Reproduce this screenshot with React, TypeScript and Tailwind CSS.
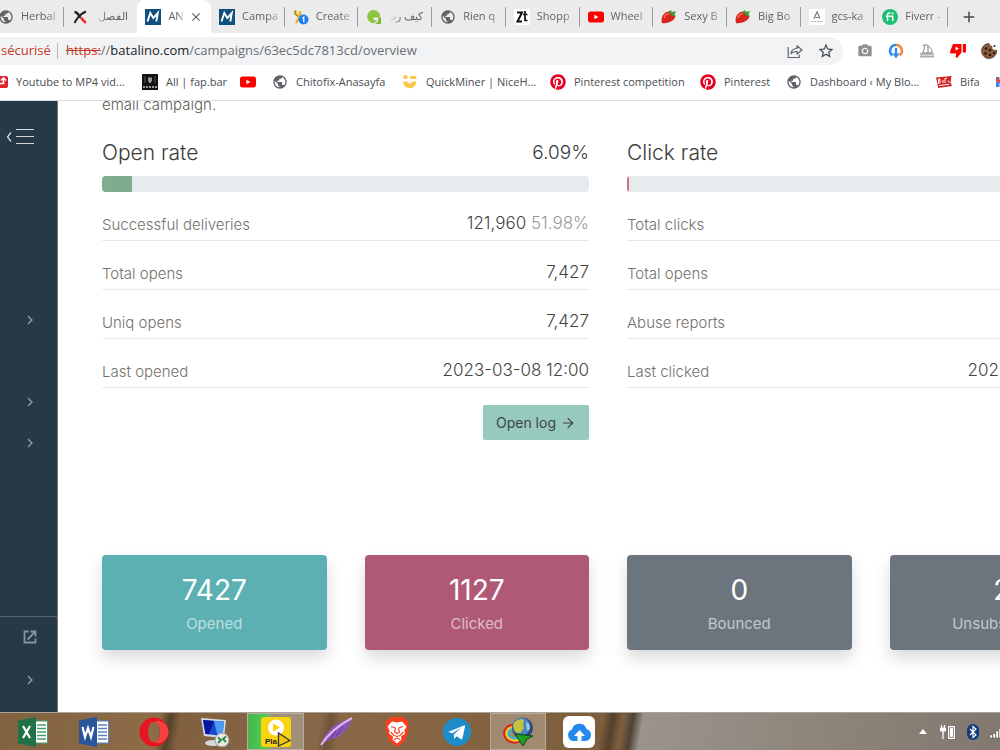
import React from 'react';
import { MdPublic, MdStarBorder, MdPhotoCamera, MdClose, MdAdd, MdChevronRight } from 'react-icons/md';
import { FaPinterest } from 'react-icons/fa';
import { ArrowRight } from 'lucide-react';

const GlobeIcon = () => <MdPublic className="h-4 w-4 text-[#5f6368]" />;

const YoutubeIcon = () => (
  <svg viewBox="0 0 16 16" className="h-4 w-4">
    <rect x="0" y="2.5" width="16" height="11" rx="2.5" fill="#f00" />
    <path d="M6.4 5.7v4.6L10.4 8z" fill="#fff" />
  </svg>
);

const XIcon = () => (
  <svg viewBox="0 0 16 16" className="h-4 w-4">
    <path d="M2.500 3c3 0 4 3 6 5.500" stroke="#222" strokeWidth="2.400" fill="none" />
    <path d="M14 2.500C10 4 5 9 2.500 14" stroke="#222" strokeWidth="2" fill="none" />
    <path d="M9 8.500c1.500 2 3 4.500 5 5" stroke="#e22" strokeWidth="2.400" fill="none" />
  </svg>
);

const MailerIcon = () => (
  <svg viewBox="0 0 16 16" className="h-4 w-4">
    <rect width="16" height="16" fill="#10507f" />
    <path d="M2.500 12.500 5.300 4l3 5 4.500-5-1.500 8.500" stroke="#fff" strokeWidth="1.900" fill="none" />
  </svg>
);

const CreateIcon = () => (
  <svg viewBox="0 0 16 16" className="h-4 w-4">
    <path d="M2.500 1v4l4 2.500M7 2v5L3 14" stroke="#e5b420" strokeWidth="2.400" fill="none" />
    <path d="M2 2v3l3 2.500" stroke="#8b7a3c" strokeWidth="1" fill="none" />
    <circle cx="10.500" cy="10.500" r="5" fill="#1a7ff0" />
    <path d="M9.300 9.200l1.500-1v5" stroke="#fff" strokeWidth="1.300" fill="none" />
  </svg>
);

const LeafIcon = () => (
  <svg viewBox="0 0 16 16" className="h-4 w-4">
    <path d="M7.500 1A6.600 6.600 0 1 0 8 14.200L11 11H7.500V8.500h6.600A6.700 6.700 0 0 0 7.500 1z" fill="#8cc63f" />
    <path d="M15 8.500V15H9l3-2.500.5-4z" fill="#7db83a" />
  </svg>
);

const ZtIcon = () => (
  <svg viewBox="0 0 16 16" className="h-4 w-4">
    <rect width="16" height="16" fill="#fff" />
    <path d="M3 3.500h5L3.500 12.500H8" stroke="#111" strokeWidth="2" fill="none" />
    <path d="M11 2v9.500h2.500M9 5.500h4.500" stroke="#111" strokeWidth="1.700" fill="none" />
  </svg>
);

const StrawberryIcon = () => (
  <svg viewBox="0 0 16 16" className="h-4 w-4">
    <path d="M1 14C-.5 9 2 3.500 7.500 2.500c4 0 7 3 6.500 6-1 3.500-8.500 6.500-13 5.500z" fill="#d8261c" />
    <path d="M3 9c1-3 3-4.500 5-4" stroke="#ff7a5c" strokeWidth="1.300" fill="none" />
    <path d="M7.500 3 10 1l1 2 4-1-1.500 3L15 8l-4-1.500z" fill="#3f9a35" />
  </svg>
);

const GcsIcon = () => (
  <svg viewBox="0 0 16 16" className="h-4 w-4">
    <rect width="16" height="16" fill="#fff" />
    <path d="M5 9.500 8 3l3 6.500M6.500 8.500h3" stroke="#777" strokeWidth="1.200" fill="none" />
    <path d="M2.500 12.500h11" stroke="#aaa" strokeDasharray="2 1" />
  </svg>
);

const FiverrIcon = () => (
  <svg viewBox="0 0 16 16" className="h-4 w-4">
    <circle cx="8" cy="8" r="8" fill="#1dbf73" />
    <path d="M5.500 12V6q0-2 2-2h1M4 7.200h6.700V12" stroke="#fff" strokeWidth="1.500" fill="none" />
    <circle cx="10.700" cy="4.500" r="1" fill="#fff" />
  </svg>
);

type Tab = { title: string; icon: React.ReactNode; active?: boolean; rtl?: boolean; bare?: boolean };

const tabs: Tab[] = [
  { title: 'Herbal', icon: <GlobeIcon /> },
  { title: 'الفصل', icon: <XIcon />, rtl: true, bare: true },
  { title: 'AN', icon: <MailerIcon />, active: true },
  { title: 'Campa', icon: <MailerIcon /> },
  { title: 'Create', icon: <CreateIcon /> },
  { title: 'كيف رب', icon: <LeafIcon />, rtl: true },
  { title: 'Rien q', icon: <GlobeIcon /> },
  { title: 'Shopp', icon: <ZtIcon /> },
  { title: 'Wheel', icon: <YoutubeIcon /> },
  { title: 'Sexy B', icon: <StrawberryIcon /> },
  { title: 'Big Bo', icon: <StrawberryIcon /> },
  { title: 'gcs-ka', icon: <GcsIcon /> },
  { title: 'Fiverr -', icon: <FiverrIcon /> },
];

function TabStrip() {
  return (
    <div className="flex h-[33px] bg-[#ebebeb] text-[11px] text-[#5f6368]">
      <div className="-ml-2.5 flex min-w-0 flex-1">
        {tabs.map((tab, i) => (
          <div
            key={i}
            className={
              tab.active
                ? 'flex min-w-0 flex-1 items-center rounded-t-lg bg-white pl-2'
                : 'flex min-w-0 flex-1 items-center pl-2'
            }
          >
            <span className="mr-[7px] shrink-0">{tab.icon}</span>
            <span
              dir={tab.rtl ? 'rtl' : 'ltr'}
              className={
                tab.rtl
                  ? 'mr-2 min-w-0 flex-1 overflow-hidden whitespace-nowrap [mask-image:linear-gradient(to_left,black_60%,transparent)]'
                  : 'min-w-0 flex-1 overflow-hidden whitespace-nowrap [mask-image:linear-gradient(to_right,black_60%,transparent)]'
              }
            >
              {tab.title}
            </span>
            {tab.active ? (
              <button type="button" aria-label="Close tab" className="mr-2 ml-1 shrink-0">
                <MdClose className="h-3.5 w-3.5" />
              </button>
            ) : (
              <span className={tab.bare ? 'h-5 w-px shrink-0' : 'h-5 w-px shrink-0 bg-[#9a9da1]'} />
            )}
          </div>
        ))}
      </div>
      <button type="button" aria-label="New tab" className="flex w-[52px] items-center pl-3 text-[#45484c]">
        <MdAdd className="h-[18px] w-[18px]" />
      </button>
    </div>
  );
}

const ShareIcon = () => (
  <svg viewBox="0 0 16 16" className="h-4 w-4" fill="none" stroke="#5f6368" strokeWidth="1.200">
    <path d="M1.200 4v10.500h11V11.500" />
    <path d="M4 10.500c.5-3.500 2.500-5 6-5V2.800L15 7l-5 4V8.500c-3 0-4.500.3-6 2z" strokeLinejoin="round" />
  </svg>
);

const DownloaderIcon = () => (
  <svg viewBox="0 0 16 16" className="h-4 w-4" fill="none">
    <path d="M4.500 12.500A5.800 5.800 0 0 1 8 2" stroke="#2f8fe8" strokeWidth="2.600" />
    <path d="M8 2a5.800 5.800 0 0 1 3.500 10.500" stroke="#f08a3c" strokeWidth="2.600" />
    <path d="M8 5v6" stroke="#2f8fe8" strokeWidth="2.400" />
    <path d="M4.500 10.500h7L8 15.500z" fill="#2f8fe8" />
  </svg>
);

const ShipIcon = () => (
  <svg viewBox="0 0 16 16" className="h-4 w-4" fill="none" stroke="#7d8286">
    <path d="M4 2h4c4 2 5 5 5 8H3c2-2 3-5 2-8M9 3v7M1 11h14" />
    <path d="M1 13.500h14" stroke="#9db69b" strokeWidth="2" />
  </svg>
);

const DislikeIcon = () => (
  <svg viewBox="0 0 16 16" className="h-4 w-4">
    <path d="M3 1h8.500v8.500L7 15l-1.500-1 .8-3.500H1c-1-.5-1-1.500-.8-2.500z" fill="#f00" />
    <path d="M12.800 1H16v8.500h-3.200z" fill="#f00" />
    <path d="M5.500 3.500v4l3.500-2z" fill="#fff" />
  </svg>
);

const CookieIcon = () => (
  <svg viewBox="0 0 16 16" className="h-4 w-4">
    <path d="M8 .5a3 3 0 0 0 3 3 3 3 0 0 0 4.500 3.500A7.500 7.500 0 1 1 8 .5z" fill="#8a5a3c" stroke="#4b2e1e" strokeWidth=".8" />
    <g fill="#2c1a12">
      <circle cx="5" cy="5.500" r="1.300" />
      <circle cx="9" cy="7" r="1.300" />
      <circle cx="4.500" cy="10.500" r="1.300" />
      <circle cx="9" cy="12" r="1.300" />
      <circle cx="13" cy="10" r="1.200" />
      <circle cx="13.500" cy="3" r="1" />
    </g>
  </svg>
);

function AddressBar() {
  return (
    <div className="flex h-[35px] items-center bg-white pt-px">
      <div className="flex h-7 flex-1 items-center rounded-r-full bg-[#f1f3f4] pr-2 pl-px text-[13px] text-[#6b6f73]">
        <span className="w-14 text-[#c5392b]">sécurisé</span>
        <span className="mr-2 h-4 w-px bg-[#b6b9bc]" />
        <span className="flex-1 whitespace-nowrap">
          <span className="text-[#c5392b] line-through">https:</span>//
          <span className="text-[#202124]">batalino.com</span>/campaigns/63ec5dc7813cd/overview
        </span>
        <button type="button" aria-label="Share" className="mr-3.5">
          <ShareIcon />
        </button>
        <button type="button" aria-label="Bookmark this page">
          <MdStarBorder className="h-[18px] w-[18px] text-[#44474a]" />
        </button>
      </div>
      <div className="flex w-[157px] shrink-0 items-center gap-[15px] overflow-hidden pl-3.5">
        <MdPhotoCamera className="h-4 w-4 shrink-0 text-[#909090]" />
        <span className="shrink-0"><DownloaderIcon /></span>
        <span className="shrink-0"><ShipIcon /></span>
        <span className="shrink-0"><DislikeIcon /></span>
        <span className="shrink-0"><CookieIcon /></span>
      </div>
    </div>
  );
}

const Mp4Icon = () => (
  <svg viewBox="0 0 16 16" className="h-4 w-4">
    <rect y="2" width="16" height="12" rx="2" fill="#e5202b" />
    <path d="M8 9.500h3.500V5M9 6.500 11.500 4 14 6.500" stroke="#fff" strokeWidth="1.600" fill="none" />
  </svg>
);

const BarIcon = () => (
  <svg viewBox="0 0 16 16" className="h-4 w-4">
    <rect width="16" height="16" fill="#111" />
    <path d="M3 2v7M13 2v7" stroke="#555" />
    <path d="M6 3.500h4v3L8.800 9H7.200L6 6.500z" fill="#999" />
    <path d="M1 13h14" stroke="#ccc" strokeWidth="1.500" strokeDasharray="2 1" />
  </svg>
);

const MinerIcon = () => (
  <svg viewBox="0 0 16 16" className="h-4 w-4" fill="#fbc94a">
    <rect x="1.500" y="1" width="4" height="4" rx="1" />
    <rect x="8" y="2" width="6.500" height="3" rx="1" />
    <path d="M1 7.500h13.500a6.700 6.700 0 0 1-13.500 0z" />
    <path d="M5.500 7.500h4.600a2.300 2 0 0 1-4.600 0z" fill="#fff" />
  </svg>
);

const PinIcon = () => <FaPinterest className="h-4 w-4 text-[#e60023]" />;

const BifaIcon = () => (
  <svg viewBox="0 0 16 16" className="h-4 w-4">
    <path d="M0 3.500 15.500 2l-1 6.500L16 12 2 14l-.5-4z" fill="#d22222" />
    <path d="M2.500 5v4.500M2.500 5q3 0 1 2 3 .5-1 2.500M7 6v3M9 9V4.500l2-.5M12 6.500l1.500 2.500M3 11.500l10-1.200" stroke="#fff" fill="none" />
  </svg>
);

const GmailIcon = () => (
  <svg viewBox="0 0 16 16" className="h-4 w-4">
    <path d="M0 3h3.500v10H0z" fill="#4285f4" />
    <path d="M12.500 3H16v10h-3.500z" fill="#34a853" />
    <path d="M0 3l8 6 8-6v3.500l-8 6-8-6z" fill="#ea4335" />
  </svg>
);

const bookmarks = [
  { label: 'Youtube to MP4 vid...', icon: <Mp4Icon />, width: 'w-[150px]' },
  { label: 'All | fap.bar', icon: <BarIcon />, width: 'w-[98px]' },
  { label: '', icon: <YoutubeIcon />, width: 'w-8' },
  { label: 'Chitofix-Anasayfa', icon: <GlobeIcon />, width: 'w-[130px]' },
  { label: 'QuickMiner | NiceH...', icon: <MinerIcon />, width: 'w-[148px]' },
  { label: 'Pinterest competition', icon: <PinIcon />, width: 'w-[150px]' },
  { label: 'Pinterest', icon: <PinIcon />, width: 'w-[86px]' },
  { label: 'Dashboard ‹ My Blo...', icon: <GlobeIcon />, width: 'w-[150px]' },
  { label: 'Bifa', icon: <BifaIcon />, width: 'w-[60px]' },
  { label: '', icon: <GmailIcon />, width: 'w-8' },
];

function BookmarksBar() {
  return (
    <nav className="flex h-[33px] items-center overflow-hidden border-b border-[#dadce0] bg-white pb-1 text-[11px] text-[#4a4d51]">
      <div className="-ml-2 flex">
        {bookmarks.map((b, i) => (
          <a key={i} href="#" className={`flex shrink-0 items-center gap-2 whitespace-nowrap ${b.width}`}>
            <span className="shrink-0">{b.icon}</span>
            {b.label}
          </a>
        ))}
      </div>
    </nav>
  );
}

const Arrow = () => <MdChevronRight className="h-[18px] w-[18px] stroke-current" />;

const ExternalIcon = () => (
  <svg viewBox="0 0 14 14" className="ml-0.5 h-3.5 w-3.5" fill="none" stroke="currentColor" strokeWidth="1.800">
    <path d="M5.500 1.500h-4v11h11v-4" />
    <path d="M7.500 1.500h5v5M12 2 4.500 9.500" />
  </svg>
);

// collapsed menu: only entries with a sub menu show an arrow
const menu = [true, false, true, true];

function Sidebar() {
  return (
    <aside className="flex w-[58px] shrink-0 flex-col border-r border-[#6f7f86] bg-[#273946] text-[#87949a]">
      <button type="button" aria-label="Collapse menu" className="mt-6 ml-1.5 h-6 w-7">
        <svg viewBox="0 0 28 24" className="h-6 w-7" fill="none" stroke="#d3d8da">
          <path d="M5 7.500 1.500 12 5 16.500" strokeWidth="1.300" />
          <path d="M10 4.500h18M10 11.500h18M10 18.500h18" strokeWidth="1.200" />
        </svg>
      </button>
      <nav className="mt-[150px]">
        {menu.map((hasArrow, i) => (
          <a key={i} href="#" className="flex h-[41px] items-center pl-[21px]">
            {hasArrow && <Arrow />}
          </a>
        ))}
      </nav>
      <nav className="mt-auto border-t border-[#55656f] pb-2.5">
        <a href="#" aria-label="Open site" className="flex h-10 items-center pl-[21px]">
          <ExternalIcon />
        </a>
        <a href="#" aria-label="More" className="flex h-[45px] items-center pl-[21px]">
          <Arrow />
        </a>
      </nav>
    </aside>
  );
}

type RatePanelProps = {
  title: string;
  rate?: string;
  percent: number;
  barClass: string;
  rows: { label: string; value?: string; note?: string }[];
};

function RatePanel({ title, rate, percent, barClass, rows }: RatePanelProps) {
  return (
    <section className="min-w-0">
      <div className="flex h-12 items-center justify-between pt-0.5 text-[#3d3b38]">
        <h2 className="text-[21px]">{title}</h2>
        <span className="text-[19px]">{rate}</span>
      </div>
      <div className="h-4 overflow-hidden rounded bg-[#e8ebee]">
        <div className={`h-full ${barClass}`} style={{ width: `${percent}%` }} />
      </div>
      <dl>
        {rows.map((row) => (
          <div
            key={row.label}
            className="flex h-[49px] items-end justify-between border-b border-dotted border-[#d4d4d4] pb-[5px]"
          >
            <dt className="text-[15px] leading-5 text-[#74716d]">{row.label}</dt>
            <dd className="text-[17px] leading-6 text-[#45423f]">
              {row.value} {row.note && <span className="text-[#9a9896]">{row.note}</span>}
            </dd>
          </div>
        ))}
      </dl>
    </section>
  );
}

const openRows = [
  { label: 'Successful deliveries', value: '121,960', note: '51.98%' },
  { label: 'Total opens', value: '7,427' },
  { label: 'Uniq opens', value: '7,427' },
  { label: 'Last opened', value: '2023-03-08 12:00' },
];

const clickRows = [
  { label: 'Total clicks' },
  { label: 'Total opens' },
  { label: 'Abuse reports' },
  { label: 'Last clicked', value: '2023-03-08 12:00' },
];

const stats = [
  { value: '7427', label: 'Opened', color: 'bg-[#5cb0b2]' },
  { value: '1127', label: 'Clicked', color: 'bg-[#b05977]' },
  { value: '0', label: 'Bounced', color: 'bg-[#6c757d]' },
  { value: '2', label: 'Unsubscribed', color: 'bg-[#6c757d]' },
];

function Overview() {
  return (
    <main className="min-w-0 flex-1 overflow-hidden bg-white pl-11 font-['Inter','Liberation_Sans',sans-serif] font-light">
      <div className="-mr-[114px] pb-[61px]">
        <p className="-mt-2 text-[15px] leading-6 text-[#5f5c58]">email campaign.</p>
        <div className="mt-[11px] grid grid-cols-2 gap-[38px]">
          <div>
            <RatePanel title="Open rate" rate="6.09%" percent={6.09} barClass="bg-[#80ab8e]" rows={openRows} />
            <div className="mt-[17px] flex justify-end">
              <button
                type="button"
                className="flex h-[35px] items-center gap-1 rounded-xs bg-[#98c9bd] px-[13px] text-sm font-normal text-[#3a4549]"
              >
                Open log <ArrowRight className="h-4 w-4" strokeWidth={1.8} />
              </button>
            </div>
          </div>
          <RatePanel title="Click rate" percent={0.4} barClass="bg-[#d0708c]" rows={clickRows} />
        </div>
        <div className="mt-[115px] grid grid-cols-4 gap-[38px]">
          {stats.map((s) => (
            <div
              key={s.label}
              className={`flex h-[95px] flex-col items-center justify-center rounded pt-0.5 shadow-[0_8px_16px_rgba(0,0,0,0.15)] ${s.color}`}
            >
              <div className="text-[28px] leading-9 font-normal text-white">{s.value}</div>
              <div className="mt-1 text-[15px] leading-6 font-normal text-white/60">{s.label}</div>
            </div>
          ))}
        </div>
      </div>
    </main>
  );
}

const OfficeIcon = ({ dark, light, glyph }: { dark: string; light: string; glyph: string }) => (
  <svg viewBox="0 0 30 30" className="h-[30px] w-[30px]">
    <rect x="15" y="4" width="14.500" height="22" fill="#fff" stroke={light} />
    <path d="M19 8h9M19 11.500h9M19 15h9M19 18.500h9M19 22h9" stroke={light} strokeWidth="1.500" />
    <path d="M0 3.500 18 0v30L0 26.500z" fill={dark} />
    <path d={glyph} stroke="#fff" strokeWidth="2.200" fill="none" />
  </svg>
);

const OperaIcon = () => (
  <svg viewBox="0 0 30 30" className="h-[30px] w-[30px]">
    <path fillRule="evenodd" d="M15 .5a14.500 14.500 0 1 0 0 29 14.500 14.500 0 1 0 0-29zm0 4.500c4 0 6 4.500 6 10s-2 10-6 10-6-4.500-6-10 2-10 6-10z" fill="#ea1420" />
    <path d="M15 5c6-4 14.500 2 14.500 10S21 29 15 25c4 0 6-4.500 6-10s-2-10-6-10z" fill="#f8403f" />
  </svg>
);

const RemoteIcon = () => (
  <svg viewBox="0 0 30 30" className="h-[30px] w-[30px]">
    <ellipse cx="13" cy="26" rx="8" ry="3" fill="#d5d8dc" />
    <path d="M1 1l25 2-2 18-20-2z" fill="#d3dbe6" />
    <path d="M3 3l21 1.500-1.500 14.500L5.500 17z" fill="#1a49cf" />
    <path d="M14 4l10 .5-1.500 14.500-5-.5z" fill="#4f9af0" />
    <path d="M3 3l11 1-5 13.300L5.500 17z" fill="#0715a0" />
    <circle cx="22" cy="23" r="7" fill="#e8e9e8" stroke="#999" />
    <path d="M18 20.500l3 2.500-3 3M26 19.500 23 22l3 3" stroke="#258a35" strokeWidth="1.800" fill="none" />
  </svg>
);

const PlayIcon = () => (
  <svg viewBox="0 0 30 30" className="h-[30px] w-[30px]">
    <rect width="30" height="30" rx="3" fill="#fad40f" />
    <circle cx="15" cy="10.500" r="8" fill="#fff" />
    <path d="M12 6.500v8l7-4z" fill="#fad40f" />
    <text x="4" y="27" fontSize="8" fontWeight="700" fontFamily="Liberation Sans" fill="#222">Pla</text>
    <path d="M17.500 16v13L29 23.500z" fill="#f2c60d" stroke="#333" strokeWidth="1.300" />
  </svg>
);

const FeatherIcon = () => (
  <svg viewBox="0 0 34 30" className="h-[30px] w-[34px]">
    <path d="M2 28C5 16 14 6 33 1c-2 12-12 20-24 22z" fill="#8a55b5" />
    <path d="M2 28C9 17 18 9 33 1" stroke="#dcb6ef" strokeWidth="2" fill="none" />
    <path d="M11 22l6-8M17 19l7-9" stroke="#5e3784" />
  </svg>
);

const BraveIcon = () => (
  <svg viewBox="0 0 26 30" className="h-[30px] w-[26px]">
    <path d="M7 0h12l3 3 3 1-1 4 1 3-4 13-8 6-8-6L1 11l1-3-1-4 3-1z" fill="#f8401c" />
    <path d="M8 4.500l5 1 5-1 4.500 5-2 4 .5 3-4 3 .5 3-4.500 4-4.500-4 .5-3-4-3 .5-3-2-4z" fill="#fff" />
    <path d="M7 9.500l4.500 1.500M19 9.500l-4.500 1.500M11.500 11l-1 4 2.500 1.500 2.500-1.500-1-4M6.500 15l3.500 3.500 3 1 3-1 3.500-3.500M10 22.500l3-1.500 3 1.500" stroke="#f8401c" strokeWidth="1.100" fill="none" />
  </svg>
);

const TelegramIcon = () => (
  <svg viewBox="0 0 28 28" className="h-7 w-7">
    <circle cx="14" cy="14" r="14" fill="#1e8cc8" />
    <path d="M5.500 13.800 21 7.600c.8-.2 1.200.3 1 1.200l-2.600 11.800c-.2.8-.9 1-1.500.6L13.800 18.200l-2 2c-.4.4-.8.2-.8-.4v-3.600l7.500-6.700-9.200 5.700-3.700-1.100c-.5-.1-.5-.1-.1-.3z" fill="#fff" />
  </svg>
);

const IdmIcon = () => (
  <svg viewBox="0 0 32 30" className="h-[30px] w-8">
    <g fill="none" strokeWidth="2">
      <path d="M13 8C5 7 0 14 3 20s11 7 16 4" stroke="#e32119" />
      <path d="M12 10C6 10 3 15 5 19s8 6 13 3" stroke="#f3d21c" />
      <path d="M12 12c-5 0-6 4-5 6s6 5 11 2" stroke="#2bb5d8" />
    </g>
    <circle cx="20.500" cy="11" r="10.500" fill="#2c4a78" />
    <circle cx="19.500" cy="9.500" r="8.800" fill="#4b86c4" />
    <path d="M11 8c2-5 8-7 11-5l-1 5 1 3-4 5-5-1z" fill="#c9c23f" />
    <path d="M24 5l3 2 1 5-3 2z" fill="#9cc8e0" />
    <path d="M13 17l18 2-6 3-4 7z" fill="#1fa023" stroke="#0d4d10" />
  </svg>
);

const CloudIcon = () => (
  <svg viewBox="0 0 32 32" className="h-8 w-8">
    <rect width="32" height="32" rx="6" fill="#fff" />
    <path d="M10 25a6 6 0 0 1-1-11.500 7.500 7.500 0 0 1 14.500-.5A6.200 6.200 0 0 1 23 25z" fill="#2389ee" />
    <path d="M14.500 26v-6H11l5.500-6 5.500 6h-3.500v6z" fill="#fff" />
  </svg>
);

const apps = [
  { name: 'Excel', icon: <OfficeIcon dark="#1f7245" light="#4c9a6c" glyph="M5 9l7 12M12 9 5 21" /> },
  { name: 'Word', icon: <OfficeIcon dark="#2a5699" light="#5b82c0" glyph="M3.500 10l2.500 10L9 11l3 9 2.500-10" /> },
  { name: 'Opera', icon: <OperaIcon /> },
  { name: 'Remote desktop', icon: <RemoteIcon /> },
  { name: 'Player', icon: <PlayIcon />, tile: 'border border-[#b9ad9d] bg-linear-to-r from-[#45b84c] via-[#53cf58] via-38% to-[#a08f79] to-40%' },
  { name: 'Notes', icon: <FeatherIcon /> },
  { name: 'Brave', icon: <BraveIcon /> },
  { name: 'Telegram', icon: <TelegramIcon /> },
  { name: 'Download manager', icon: <IdmIcon />, tile: 'border border-[#b8a898] bg-[#a08a72]' },
  { name: 'Cloud upload', icon: <CloudIcon /> },
];

const BatteryIcon = () => (
  <svg viewBox="0 0 16 16" className="h-4 w-4" fill="none" stroke="#fff">
    <path d="M1.500 1v3M4.500 1v3M3 7v8" strokeWidth="1.300" />
    <path d="M.5 4h5v3h-5z" fill="#fff" />
    <path d="M7.500 1.500h8v14h-8z" stroke="#444" strokeWidth=".8" />
    <path d="M8.500 2.500h6v12h-6z" strokeWidth="1.400" />
    <path d="M10.500 4.500h2v8h-2z" fill="#fff" />
  </svg>
);

const BluetoothIcon = () => (
  <svg viewBox="0 0 12 16" className="h-4 w-3">
    <rect width="12" height="16" rx="6" fill="#123a80" />
    <path d="M3 5l6 6-3 2.500V2.500L9 5l-6 6" stroke="#fff" strokeWidth="1.200" fill="none" />
  </svg>
);

const SignalIcon = () => (
  <svg viewBox="0 0 16 16" className="h-4 w-4" fill="#fff" stroke="#444" strokeWidth=".4">
    <path d="M0 11h2.500v3H0zM3 9.500h2.500V14H3zM6 7h2.500v7H6zM9 4.500h2.500V14H9zM12 2h2.500v12H12z" />
  </svg>
);

function Taskbar() {
  return (
    <footer className="flex h-[38px] shrink-0 items-center justify-between overflow-hidden border-t border-[#a9a39b] bg-[linear-gradient(100deg,#82633f_0%,#8d6c48_16%,#54402c_17%,#80603f_18%,#876848_32%,#6f5337_33%,#886847_34%,#82623f_50%,#7d5d3c_60%,#54402c_61%,#80603f_62%,#4d4236_63%,#9a948b_64%,#8d857a_82%,#81796f_100%)]">
      <div className="ml-[3px] grid w-[606px] shrink-0 grid-cols-10">
        {apps.map((app) => (
          <button
            key={app.name}
            type="button"
            aria-label={app.name}
            className={`mx-0.5 flex h-[37px] items-center justify-center ${app.tile || ''}`}
          >
            {app.icon}
          </button>
        ))}
      </div>
      <div className="-mr-1.5 flex items-center gap-[11px]">
        <svg viewBox="0 0 8 5" className="mr-0.5 h-[5px] w-2">
          <path d="M0 5l4-5 4 5z" fill="#fff" />
        </svg>
        <BatteryIcon />
        <BluetoothIcon />
        <SignalIcon />
      </div>
    </footer>
  );
}

export default function App() {
  return (
    <div className="flex min-h-screen flex-col overflow-hidden bg-white font-['Open_Sans','Noto_Sans',sans-serif]">
      <header>
        <TabStrip />
        <AddressBar />
        <BookmarksBar />
      </header>
      <div className="flex flex-1">
        <Sidebar />
        <Overview />
      </div>
      <Taskbar />
    </div>
  );
}
